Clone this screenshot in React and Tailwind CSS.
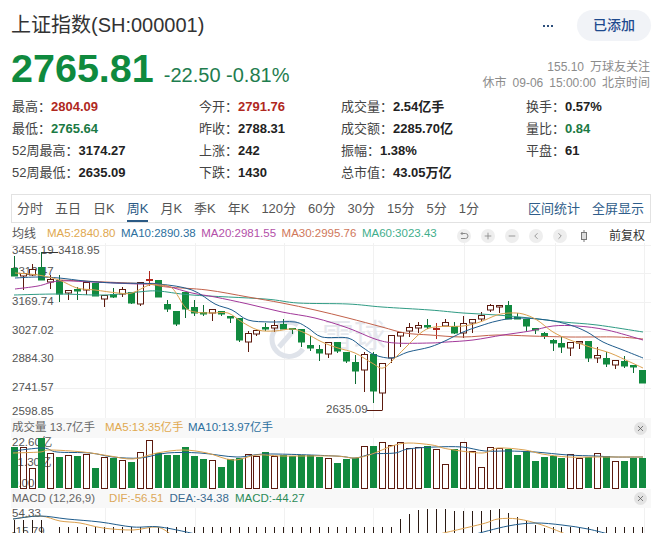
import { Plus, Minus, ChevronLeft, ChevronRight, X } from "lucide-react";

const FONT = "font-['Liberation_Sans','Noto_Sans_CJK_SC',sans-serif]";
const GREEN = "#118a3f";
const GREEN_DARK = "#0d6b33";
const RED_DARK = "#5c1a0e";

const stats = [
  ["最高", "2804.09", "text-[#b0281e]"], ["今开", "2791.76", "text-[#b0281e]"], ["成交量", "2.54亿手", "text-[#222]"], ["换手", "0.57%", "text-[#222]"],
  ["最低", "2765.64", "text-[#1b7a44]"], ["昨收", "2788.31", "text-[#222]"], ["成交额", "2285.70亿", "text-[#222]"], ["量比", "0.84", "text-[#1b7a44]"],
  ["52周最高", "3174.27", "text-[#222]"], ["上涨", "242", "text-[#222]"], ["振幅", "1.38%", "text-[#222]"], ["平盘", "61", "text-[#222]"],
  ["52周最低", "2635.09", "text-[#222]"], ["下跌", "1430", "text-[#222]"], ["总市值", "43.05万亿", "text-[#222]"],
];

const tabs = ["分时", "五日", "日K", "周K", "月K", "季K", "年K", "120分", "60分", "30分", "15分", "5分", "1分"];

// [type, bodyTop, bodyBottom, high, low] in page pixels, g = down, u = up, r = flat red
const candles = [
  ["g", 268, 276, 256, 276], ["u", 273, 276, 273, 290], ["u", 269, 275, 264, 276], ["g", 267, 280, 252, 280],
  ["u", 279, 282, 275, 289], ["g", 280, 294, 275, 302], ["u", 290, 293, 290, 300], ["g", 289, 291, 287, 300],
  ["u", 282, 290, 282, 295], ["g", 283, 296, 283, 296], ["u", 295, 299, 295, 307], ["g", 294, 297, 288, 298],
  ["u", 289, 294, 287, 297], ["g", 292, 303, 292, 304], ["u", 282, 304, 282, 306], ["r", 279, 280, 271, 286],
  ["g", 280, 297, 280, 297], ["g", 304, 309, 300, 312], ["g", 311, 324, 311, 326], ["g", 292, 309, 292, 318],
  ["g", 307, 313, 300, 316], ["g", 312, 314, 305, 316], ["u", 309, 313, 309, 321], ["g", 311, 314, 311, 316],
  ["g", 316, 318, 316, 323], ["g", 318, 340, 318, 342], ["u", 333, 342, 331, 352], ["u", 330, 334, 330, 336],
  ["g", 327, 329, 323, 331], ["u", 325, 328, 320, 332], ["g", 324, 329, 319, 329], ["g", 328, 329, 328, 334],
  ["g", 329, 342, 329, 347], ["g", 345, 348, 336, 351], ["g", 349, 353, 345, 361], ["u", 342, 354, 342, 358],
  ["g", 342, 351, 342, 353], ["g", 352, 361, 352, 363], ["g", 362, 371, 355, 384], ["u", 354, 370, 352, 392],
  ["g", 354, 391, 352, 403], ["u", 363, 393, 363, 410], ["u", 335, 358, 335, 363], ["u", 332, 336, 332, 347],
  ["u", 327, 331, 323, 337], ["u", 325, 328, 322, 333], ["g", 325, 327, 319, 329], ["r", 328, 329, 323, 339],
  ["u", 322, 326, 319, 326], ["g", 326, 333, 322, 334], ["u", 323, 333, 316, 338], ["u", 319, 323, 319, 333],
  ["u", 315, 319, 312, 321], ["u", 305, 310, 304, 312], ["u", 305, 307, 305, 313], ["g", 305, 319, 301, 319],
  ["g", 317, 319, 313, 319], ["g", 319, 326, 319, 331], ["g", 328, 330, 328, 334], ["g", 333, 336, 332, 339],
  ["g", 340, 343, 339, 351], ["g", 343, 347, 337, 353], ["u", 342, 348, 342, 356], ["u", 341, 343, 341, 349],
  ["g", 341, 358, 341, 362], ["u", 355, 358, 347, 363], ["g", 358, 364, 352, 367], ["u", 360, 365, 360, 369],
  ["g", 361, 366, 356, 368], ["g", 365, 367, 365, 373], ["g", 370, 383, 370, 383],
];

const volumes = [
  ["g", 447], ["u", 447], ["u", 468], ["g", 438], ["u", 453], ["g", 457], ["u", 455], ["g", 456], ["u", 454],
  ["g", 468], ["u", 457], ["g", 458], ["u", 460], ["g", 462], ["u", 452], ["u", 440], ["g", 453], ["g", 455],
  ["g", 455], ["g", 447], ["g", 456], ["g", 459], ["u", 460], ["g", 467], ["g", 459], ["g", 458], ["u", 454],
  ["u", 456], ["g", 452], ["u", 456], ["g", 455], ["g", 456], ["g", 455], ["g", 455], ["g", 457], ["u", 458],
  ["g", 463], ["g", 459], ["g", 458], ["u", 446], ["g", 446], ["u", 442], ["u", 445], ["u", 442], ["u", 448],
  ["u", 447], ["g", 446], ["u", 449], ["u", 464], ["g", 449], ["u", 442], ["u", 451], ["u", 467], ["u", 447],
  ["u", 448], ["g", 449], ["g", 455], ["g", 451], ["g", 461], ["g", 457], ["g", 456], ["g", 458], ["u", 454],
  ["u", 458], ["g", 457], ["u", 453], ["g", 456], ["u", 461], ["g", 461], ["g", 458], ["g", 458],
];

const priceLines = [
  { color: "#2f9b84", pts: [[14, 295], [58, 294], [105, 295], [138, 292], [158, 291], [192, 295], [265, 299], [298, 303], [348, 304], [382, 307], [430, 310], [463, 313], [497, 315], [530, 318], [563, 322], [597, 325], [643, 332]] },
  { color: "#c2614a", pts: [[60, 280], [105, 282], [147, 284], [167, 287], [207, 290], [248, 297], [282, 303], [315, 310], [348, 318], [382, 327], [405, 333], [430, 335], [463, 337], [497, 335], [530, 336], [570, 337], [617, 337], [643, 339]] },
  { color: "#a2389a", pts: [[15, 289], [38, 286], [59, 281], [92, 282], [138, 284], [158, 284], [192, 293], [215, 297], [248, 304], [282, 312], [315, 318], [348, 328], [375, 339], [395, 343], [430, 343], [447, 342], [473, 340], [503, 335], [530, 331], [553, 326], [577, 326], [607, 330], [643, 340]] },
  { color: "#1f5c8c", pts: [[15, 278], [38, 277], [59, 278], [85, 281], [115, 283], [158, 284], [192, 290], [215, 304], [232, 310], [248, 320], [270, 322], [295, 322], [308, 328], [322, 337], [348, 338], [362, 347], [375, 355], [392, 358], [408, 352], [430, 347], [447, 340], [463, 332], [480, 326], [497, 321], [517, 318], [547, 320], [570, 325], [587, 332], [603, 342], [623, 350], [643, 358]] },
  { color: "#dba04e", pts: [[15, 273], [38, 275], [59, 280], [77, 288], [95, 290], [118, 293], [132, 293], [149, 285], [158, 285], [172, 288], [185, 307], [195, 312], [212, 313], [228, 313], [242, 322], [258, 330], [275, 331], [292, 329], [305, 333], [322, 342], [338, 348], [355, 353], [372, 363], [383, 368], [395, 358], [408, 345], [422, 332], [435, 327], [463, 326], [480, 322], [497, 315], [510, 313], [523, 314], [537, 320], [553, 332], [570, 340], [590, 347], [610, 353], [630, 362], [643, 368]] },
];

const volumeLines = [
  { color: "#1f5c8c", pts: [[13, 451], [43, 448], [57, 452], [90, 453], [113, 457], [140, 458], [167, 453], [200, 453], [237, 457], [267, 454], [335, 456], [355, 458], [372, 454], [395, 453], [408, 449], [435, 447], [462, 447], [485, 451], [508, 451], [535, 452], [568, 455], [595, 456], [615, 457], [643, 457]] },
  { color: "#dba04e", pts: [[13, 453], [40, 452], [50, 450], [83, 452], [110, 456], [133, 459], [157, 453], [183, 450], [207, 453], [233, 460], [257, 455], [283, 456], [335, 456], [355, 458], [372, 454], [392, 446], [408, 443], [432, 445], [448, 449], [482, 453], [498, 448], [525, 450], [542, 454], [568, 457], [595, 457], [612, 457], [643, 457]] },
];

const macdLines = [
  { color: "#dba04e", pts: [[13, 519], [40, 516], [60, 521], [80, 523], [103, 528], [133, 530], [157, 527], [172, 535]] },
  { color: "#dba04e", pts: [[435, 535], [482, 524], [498, 519], [518, 519], [542, 525], [568, 535]] },
  { color: "#1f5c8c", pts: [[13, 519], [40, 516], [67, 519], [100, 522], [133, 527], [160, 527], [200, 535]] },
  { color: "#1f5c8c", pts: [[472, 535], [508, 526], [535, 523], [562, 525], [588, 529], [612, 535]] },
];

// top of each MACD histogram tick, bar index -> y
const macdTops = {
  0: 520, 1: 520, 2: 520, 3: 520, 42: 527, 43: 519, 44: 514, 45: 510, 46: 509, 47: 509, 48: 509, 49: 511, 50: 511,
  51: 511, 52: 511, 53: 510, 54: 509, 55: 513, 56: 517, 57: 521, 58: 525, 59: 528,
};

const barX = (i) => 14.3 + i * 8.97;

// smooth line through the points
const smooth = (pts) => {
  let d = `M${pts[0][0]} ${pts[0][1]}`;
  for (let i = 0; i < pts.length - 1; i++) {
    const p0 = pts[i - 1] || pts[i];
    const p1 = pts[i];
    const p2 = pts[i + 1];
    const p3 = pts[i + 2] || p2;
    d += `C${p1[0] + (p2[0] - p0[0]) / 6} ${p1[1] + (p2[1] - p0[1]) / 6} ${p2[0] - (p3[0] - p1[0]) / 6} ${p2[1] - (p3[1] - p1[1]) / 6} ${p2[0]} ${p2[1]}`;
  }
  return d;
};

const Lines = ({ lines, width = 1 }) =>
  lines.map((l, i) => <path key={i} d={smooth(l.pts)} fill="none" stroke={l.color} strokeWidth={width} />);

const VERTICALS = [105, 195, 284, 373, 464, 555, 644];

const Grid = ({ top, bottom, rows = [] }) => (
  <g stroke="#f1f1f1" strokeWidth="1">
    {VERTICALS.map((x) => <line key={x} x1={x + 0.5} x2={x + 0.5} y1={top} y2={bottom} />)}
    {rows.map((y) => <line key={y} x1="11" x2="651" y1={y + 0.5} y2={y + 0.5} />)}
  </g>
);

const AxisLabel = ({ x = 12, y, children, anchor = "start" }) => (
  <text x={x} y={y + 4} fontSize="11.5" fill="#555" textAnchor={anchor}>{children}</text>
);

const PriceChart = () => (
  <svg className="block" width="670" height="175" viewBox="0 243 670 175">
    <Grid top={243} bottom={418} rows={[245, 273, 302, 331, 359, 388]} />

    {/* watermark */}
    <g fill="none" stroke="#dfe3ea">
      <path d="M298 325 A17 17 0 1 0 303 349" strokeWidth="5" />
      <path d="M279 347 L293 331" strokeWidth="5" />
    </g>
    <text x="322" y="347" fontSize="32" fill="#e6e8ed">雪球</text>

    <AxisLabel y={250}>3455.19</AxisLabel>
    <AxisLabel x={58} y={250}>3418.95</AxisLabel>
    <AxisLabel y={271}>3312.47</AxisLabel>
    <AxisLabel y={301}>3169.74</AxisLabel>
    <AxisLabel y={330}>3027.02</AxisLabel>
    <AxisLabel y={358}>2884.30</AxisLabel>
    <AxisLabel y={387}>2741.57</AxisLabel>
    <AxisLabel y={411}>2598.85</AxisLabel>
    <AxisLabel x={326} y={408.5}>2635.09</AxisLabel>

    <path d="M41.5 252.5H58" stroke="#333" fill="none" />
    <path d="M367 410.5H382.5" stroke={RED_DARK} fill="none" />

    {candles.map(([t, top, bot, high, low], i) => {
      const x = Math.round(barX(i)) + 0.5;
      const stroke = t === "g" ? GREEN_DARK : t === "r" ? "#b0281e" : RED_DARK;
      return (
        <g key={i}>
          <line x1={x} x2={x} y1={high} y2={low} stroke={stroke} />
          <rect
            x={x - 3}
            y={top + 0.5}
            width="6"
            height={Math.max(bot - top - 0.5, 1)}
            fill={t === "u" ? "#fff" : t === "r" ? "#b0281e" : GREEN}
            stroke={t === "g" ? GREEN : stroke}
          />
        </g>
      );
    })}
    <Lines lines={priceLines} />
  </svg>
);

const VolumeChart = () => (
  <svg className="block overflow-visible" width="670" height="51" viewBox="0 438 670 51">
    <Grid top={438} bottom={489} />
    <AxisLabel y={442}>22.60亿</AxisLabel>
    <AxisLabel y={462}>11.30亿</AxisLabel>
    <AxisLabel y={483}>0.00</AxisLabel>
    {volumes.map(([t, top], i) => {
      const x = Math.round(barX(i));
      return t === "g" ? (
        <rect key={i} x={x - 3} y={top} width="7" height={488 - top} fill={GREEN} />
      ) : (
        <rect key={i} x={x - 2.5} y={top + 0.5} width="6" height={488 - top} fill="none" stroke={RED_DARK} />
      );
    })}
    <Lines lines={volumeLines} />
  </svg>
);

const MacdChart = () => (
  <svg className="block" width="670" height="25" viewBox="0 508 670 25">
    <Grid top={508} bottom={533} />
    <AxisLabel y={513}>54.33</AxisLabel>
    <AxisLabel y={531}>-15.79</AxisLabel>
    {volumes.map((_, i) => {
      if (i === 4) return null;
      const x = Math.round(barX(i)) + 0.5;
      return <line key={i} x1={x} x2={x} y1={macdTops[i] || 527} y2={533} stroke="#2a1a14" />;
    })}
    <Lines lines={macdLines} />
  </svg>
);

const ToolButton = ({ children }) => (
  <span className="flex h-[14px] w-[14px] items-center justify-center rounded-full bg-[#eeeeee] text-[#888]">
    {children}
  </span>
);

const CloseButton = () => (
  <span className="flex h-[13px] w-[13px] items-center justify-center rounded-full bg-[#e3e3e3] text-[#555]">
    <X size={9} strokeWidth={2} />
  </span>
);

const App = () => {
  return (
    <div className={`h-[533px] w-[670px] overflow-hidden bg-white ${FONT}`}>
      {/* Title */}
      <div className="flex h-[48px] items-start justify-between pl-[11px] pr-[19px] pt-[10px]">
        <h1 className="text-[20px] font-normal leading-[30px] text-[#333]">上证指数(SH:000001)</h1>
        <div className="flex items-center gap-[24px]">
          <span className="flex gap-[2px]">
            <i className="h-[2px] w-[2px] bg-[#2d4f7c]" />
            <i className="h-[2px] w-[2px] bg-[#2d4f7c]" />
            <i className="h-[2px] w-[2px] bg-[#2d4f7c]" />
          </span>
          <button className="h-[31px] w-[74px] rounded-full bg-[#f1f3f7] text-[14px] font-medium text-[#1e4a8e]">
            已添加
          </button>
        </div>
      </div>

      {/* Price */}
      <div className="flex h-[47px] items-start justify-between pl-[11px] pr-[20px]">
        <div className="flex items-baseline gap-[10px]">
          <span className="text-[39.5px] font-bold leading-[40px] text-[#0f8a3e]">2765.81</span>
          <span className="text-[20px] text-[#1f7d4f]">-22.50 -0.81%</span>
        </div>
        <div className="pt-[11px] text-right text-[12px] leading-[16px] text-[#8c8c8c]">
          <div className="flex justify-end gap-[6px]">
            <span>155.10</span>
            <span>万球友关注</span>
          </div>
          <div className="flex justify-end gap-[6px]">
            <span>休市</span>
            <span>09-06</span>
            <span>15:00:00</span>
            <span>北京时间</span>
          </div>
        </div>
      </div>

      {/* Stats */}
      <div className="ml-[12px] grid h-[88px] grid-cols-[187px_142px_185px_1fr] pt-[1px] text-[13px] leading-[22px] text-[#444]">
        {stats.map(([label, value, color]) => (
          <div key={label}>
            {label}：<span className={`font-bold ${color}`}>{value}</span>
          </div>
        ))}
      </div>

      <div className="h-[11px]" />

      {/* Period tabs */}
      <div className="mx-[11px] flex h-[29px] w-[640px] items-stretch justify-between border border-[#e2e2e2] pl-[5px] pr-[6px] text-[13px] text-[#555]">
        <div className="flex gap-[12px]">
          {tabs.map((t) => (
            <span
              key={t}
              className={`flex items-center ${t === "周K" ? "border-b-2 border-[#2b5a85] pt-[2px] text-[#2b5a85]" : ""}`}
            >
              {t}
            </span>
          ))}
        </div>
        <div className="flex items-center gap-[12px] text-[#2f5d8a]">
          <span>区间统计</span>
          <span>全屏显示</span>
        </div>
      </div>

      {/* MA legend and tools */}
      <div className="flex h-[20px] items-center justify-between pl-[12px] pr-[25px] pt-[1px] text-[11.5px]">
        <div className="flex items-center gap-[5.5px]">
          <span className="mr-[5.5px] text-[12px] text-[#555]">均线</span>
          <span className="text-[#e0a84f]">MA5:2840.80</span>
          <span className="text-[#2c6f9e]">MA10:2890.38</span>
          <span className="text-[#b34fa8]">MA20:2981.55</span>
          <span className="text-[#d0775a]">MA30:2995.76</span>
          <span className="text-[#3fae8c]">MA60:3023.43</span>
        </div>
        <div className="flex items-center gap-[10px] pt-[5px]">
          <ToolButton>
            <svg width="10" height="10" viewBox="0 0 10 10" fill="none" stroke="currentColor" strokeWidth="1">
              <path d="M2 2.5H6.5a2.2 2.2 0 0 1 0 5H2M3.5 1L2 2.5 3.5 4" />
            </svg>
          </ToolButton>
          <ToolButton><Plus size={10} /></ToolButton>
          <ToolButton><Minus size={10} /></ToolButton>
          <ToolButton><ChevronLeft size={10} /></ToolButton>
          <ToolButton><ChevronRight size={10} /></ToolButton>
          <svg width="14" height="14" viewBox="0 0 14 14" fill="none" stroke="#777">
            <path d="M7 1V13" />
            <rect x="4.5" y="3.5" width="5" height="7" fill="#ddd" />
          </svg>
          <span className="ml-[8px] text-[12px] text-[#333]">前复权</span>
        </div>
      </div>

      <PriceChart />

      {/* Volume */}
      <div className="mx-[11px] flex h-[20px] w-[640px] items-center justify-between bg-[#f8f8f8] pl-[1px] pr-[4px] text-[11.5px]">
        <div className="flex items-center">
          <span className="w-[93px] text-[#666]">成交量 13.7亿手</span>
          <span className="w-[83px] text-[#e0a84f]">MA5:13.35亿手</span>
          <span className="text-[#2c6f9e]">MA10:13.97亿手</span>
        </div>
        <CloseButton />
      </div>
      <VolumeChart />

      {/* MACD */}
      <div className="mx-[11px] flex h-[19px] w-[640px] items-center justify-between bg-[#f8f8f8] pl-[1px] pr-[4px] text-[11.5px]">
        <div className="flex items-center gap-[6px]">
          <span className="mr-[8px] text-[#666]">MACD (12,26,9)</span>
          <span className="text-[#dca85a]">DIF:-56.51</span>
          <span className="text-[#3a6a90]">DEA:-34.38</span>
          <span className="text-[#2c8b58]">MACD:-44.27</span>
        </div>
        <CloseButton />
      </div>
      <MacdChart />
    </div>
  );
};

export default App;
